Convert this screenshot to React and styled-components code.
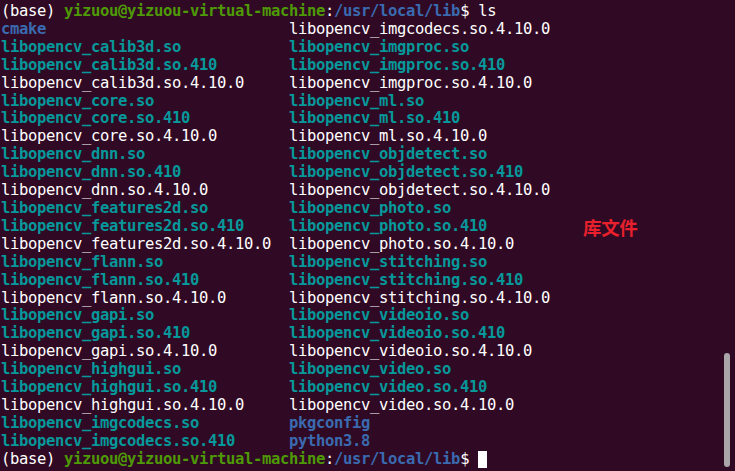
import styled, { createGlobalStyle } from 'styled-components'

const GlobalStyle = createGlobalStyle`
  html, body {
    margin: 0;
    padding: 0;
    background: #300a24;
  }
`

const Terminal = styled.div`
  position: relative;
  width: 735px;
  height: 471px;
  overflow: hidden;
  background-color: #300a24;
  color: #ffffff;
  font-family: "DejaVu Sans Mono", "Liberation Mono", monospace;
  font-size: 15.5px;
  letter-spacing: -0.33px;
  line-height: 17.92px;
  padding: 3px 0 0 1px;
  box-sizing: border-box;
  white-space: pre;
`

const Line = styled.div`
  height: 17.92px;
`

const Listing = styled.div`
  display: grid;
  grid-template-columns: 288px auto;
  grid-auto-flow: column;
  grid-template-rows: repeat(24, 17.92px);
`

const colors = {
  dir: '#3a6ab0',
  link: '#06989a',
  file: '#ffffff',
}

const Entry = styled.span`
  color: ${props => colors[props.kind]};
  font-weight: ${props => (props.kind === 'file' ? 'normal' : 'bold')};
`

const User = styled.span`
  color: #4e9a06;
  font-weight: bold;
`

const Path = styled.span`
  color: #3a6ab0;
  font-weight: bold;
`

const Cursor = styled.span`
  display: inline-block;
  width: 9px;
  height: 17px;
  background: #ffffff;
  vertical-align: -4px;
`

const Note = styled.div`
  position: absolute;
  left: 583px;
  top: 216px;
  color: #e8202c;
  font-family: "Noto Sans CJK SC", sans-serif;
  font-weight: bold;
  font-size: 18.5px;
  line-height: 22px;
`

const Scrollbar = styled.div`
  position: absolute;
  right: 5px;
  top: 353px;
  width: 6px;
  height: 114px;
  border-radius: 3px;
  background: #a9a5a8;
`

const libs = ['calib3d', 'core', 'dnn', 'features2d', 'flann', 'gapi', 'highgui', 'imgcodecs', 'imgproc', 'ml', 'objdetect', 'photo', 'stitching', 'videoio', 'video']

const entries = [{ name: 'cmake', kind: 'dir' }]
libs.forEach(lib => {
  entries.push({ name: `libopencv_${lib}.so`, kind: 'link' })
  entries.push({ name: `libopencv_${lib}.so.410`, kind: 'link' })
  entries.push({ name: `libopencv_${lib}.so.4.10.0`, kind: 'file' })
})
entries.push({ name: 'pkgconfig', kind: 'dir' })
entries.push({ name: 'python3.8', kind: 'dir' })

const Prompt = ({ children }) => (
  <Line>
    (base) <User>yizuou@yizuou-virtual-machine</User>:<Path>/usr/local/lib</Path>$ {children}
  </Line>
)

export default function App() {
  return (
    <>
      <GlobalStyle />
      <Terminal>
        <Prompt>ls</Prompt>
        <Listing>
          {entries.map(e => (
            <Entry key={e.name} kind={e.kind}>{e.name}</Entry>
          ))}
        </Listing>
        <Prompt><Cursor /></Prompt>
        <Note>库文件</Note>
        <Scrollbar />
      </Terminal>
    </>
  )
}
